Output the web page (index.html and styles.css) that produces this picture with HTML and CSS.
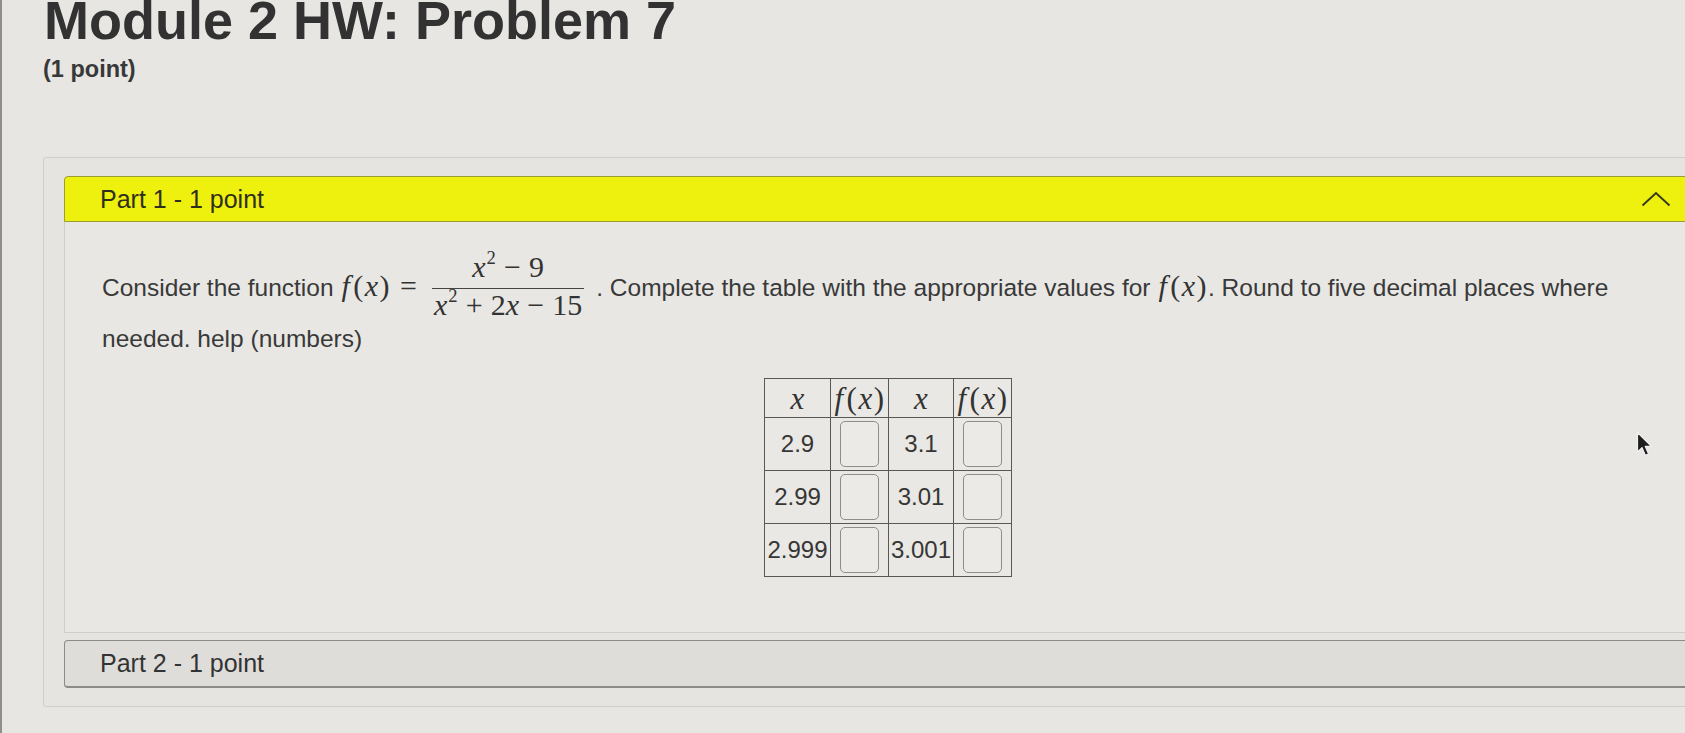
FILE: index.html
```html
<!DOCTYPE html>
<html lang="en">
<head>
<meta charset="utf-8">
<title>Module 2 HW: Problem 7</title>
<link rel="stylesheet" href="styles.css">
</head>
<body>
<div class="page">
  <h1 class="title">Module 2 HW: Problem 7</h1>
  <div class="points">(1 point)</div>

  <div class="problem">
    <section class="part">
      <div class="part-head active">
        <span class="part-label">Part 1 - 1 point</span>
        <svg class="caret" width="30" height="16" viewBox="0 0 30 16"><polyline points="1.5,14.5 15,2 28.5,14.5" fill="none" stroke="#3a3a20" stroke-width="2"/></svg>
      </div>
      <div class="part-body">
        <p class="question">Consider the function <span class="m"><span class="mi f">f</span><span class="mo">(</span><span class="mi">x</span><span class="mo">)</span><span class="rel">=</span></span><span class="frac"><span class="num m"><span class="mi">x</span><sup class="sup">2</sup><span class="bin">−</span>9</span><span class="den m"><span class="mi">x</span><sup class="sup">2</sup><span class="bin">+</span>2<span class="mi">x</span><span class="bin">−</span>15</span></span>. Complete the table with the appropriate values for <span class="m"><span class="mi f">f</span><span class="mo">(</span><span class="mi">x</span><span class="mo">)</span></span>. Round to five decimal places where needed. help (numbers)</p>

        <table class="values">
          <tr class="head-row">
            <th class="c1"><span class="m"><span class="mi">x</span></span></th>
            <th class="c2"><span class="m"><span class="mi f">f</span><span class="mo">(</span><span class="mi">x</span><span class="mo">)</span></span></th>
            <th class="c3"><span class="m"><span class="mi">x</span></span></th>
            <th class="c4"><span class="m"><span class="mi f">f</span><span class="mo">(</span><span class="mi">x</span><span class="mo">)</span></span></th>
          </tr>
          <tr>
            <td>2.9</td>
            <td><input class="blank" type="text" aria-label="f(2.9)"></td>
            <td>3.1</td>
            <td><input class="blank" type="text" aria-label="f(3.1)"></td>
          </tr>
          <tr>
            <td>2.99</td>
            <td><input class="blank" type="text" aria-label="f(2.99)"></td>
            <td>3.01</td>
            <td><input class="blank" type="text" aria-label="f(3.01)"></td>
          </tr>
          <tr>
            <td>2.999</td>
            <td><input class="blank" type="text" aria-label="f(2.999)"></td>
            <td>3.001</td>
            <td><input class="blank" type="text" aria-label="f(3.001)"></td>
          </tr>
        </table>
      </div>
    </section>

    <section class="part">
      <div class="part-head closed">
        <span class="part-label">Part 2 - 1 point</span>
      </div>
    </section>
  </div>
</div>

<svg class="cursor" width="17" height="27" viewBox="0 0 17 27">
  <path d="M1.5 1.5 L1.5 21 L6 16.6 L9.4 24.4 L12.6 23 L9.3 15.4 L15.4 15.4 Z" fill="#1e1e1e" stroke="#f0f0f0" stroke-width="1.2" stroke-linejoin="round"/>
</svg>
</body>
</html>
```

FILE: styles.css
```css
html, body {
  margin: 0;
  padding: 0;
  overflow: hidden;
  height: 733px;
}

body {
  background: #e7e6e2;
  font-family: "Liberation Sans", Arial, sans-serif;
  color: #363636;
  position: relative;
  border-left: 2px solid #8e8e8b;
  box-sizing: border-box;
}

.page {
  padding-left: 41px;
  width: 1686px;
}

.title {
  margin: -7px 0 0 1px;
  font-size: 54px;
  line-height: 54px;
  font-weight: bold;
  color: #323232;
  white-space: nowrap;
}

.points {
  margin-top: 11px;
  font-size: 23.5px;
  line-height: 22px;
  font-weight: bold;
  color: #383838;
}

.problem {
  margin-top: 77px;
  border: 1px solid #cecdc9;
  border-radius: 3px;
  background: #e5e4e0;
  padding: 18px 20px 18px;
}

.part-head {
  display: flex;
  align-items: center;
  justify-content: space-between;
  box-sizing: border-box;
  height: 46px;
  padding: 0 36px 0 35px;
  font-size: 25px;
}

.part-head.active {
  background: #eef00e;
  border: 1px solid #9c9c36;
  border-radius: 4px 4px 0 0;
  color: #2f2f1c;
}

.part-head.closed {
  height: 48px;
  margin-top: 7px;
  background: #dedddA;
  border: 1px solid #8c8b88;
  border-bottom-width: 2px;
  border-radius: 4px;
  color: #333;
}

.caret {
  display: block;
}

.part-body {
  border: 1px solid #cfcecA;
  border-top: none;
  background: #e8e7e3;
  padding: 29px 33px 55px 37px;
}

.question {
  margin: 0;
  padding-right: 34px;
  font-size: 24.5px;
  line-height: 36px;
  color: #393939;
}

.m {
  font-family: "Liberation Serif", "Times New Roman", serif;
  font-size: 30px;
  color: #333;
}

.mi {
  font-style: italic;
}

.mi.f {
  margin-right: 0.06em;
  margin-left: 0.04em;
}

.mo {
  margin: 0 0.05em;
}

.rel {
  margin-left: 0.3em;
}

.bin {
  margin: 0 0.27em;
}

.sup {
  font-size: 0.62em;
  line-height: 0;
  position: relative;
  top: -0.1em;
  margin-left: 0.06em;
}

.frac {
  display: inline-flex;
  flex-direction: column;
  align-items: stretch;
  vertical-align: 19px;
  margin: 0 12px 0 15px;
}

.num, .den {
  display: block;
  text-align: center;
  line-height: 32px;
  padding: 0 2px;
}

.num {
  padding-bottom: 5px;
  border-bottom: 1.5px solid #444;
}

.values {
  margin: 21px auto 0;
  border-collapse: collapse;
  font-size: 24px;
  color: #363636;
  background: #e9e8e4;
}

.values .m {
  font-size: 31px;
}

.values th,
.values td {
  border: 1px solid #585858;
  padding: 0;
  text-align: center;
  vertical-align: middle;
}

.values th {
  height: 38px;
  font-weight: normal;
  line-height: 1;
}

.values td {
  height: 52px;
}

.c1 { width: 65px; }
.c2 { width: 57px; }
.c3 { width: 64px; }
.c4 { width: 57px; }

.blank {
  display: block;
  box-sizing: border-box;
  width: 39px;
  height: 46px;
  margin: 0 auto;
  padding: 0;
  border: 1px solid #8d8d8b;
  border-radius: 5px;
  background: #ebeae6;
  font: inherit;
}

.cursor {
  position: absolute;
  left: 1634px;
  top: 431px;
}
```
